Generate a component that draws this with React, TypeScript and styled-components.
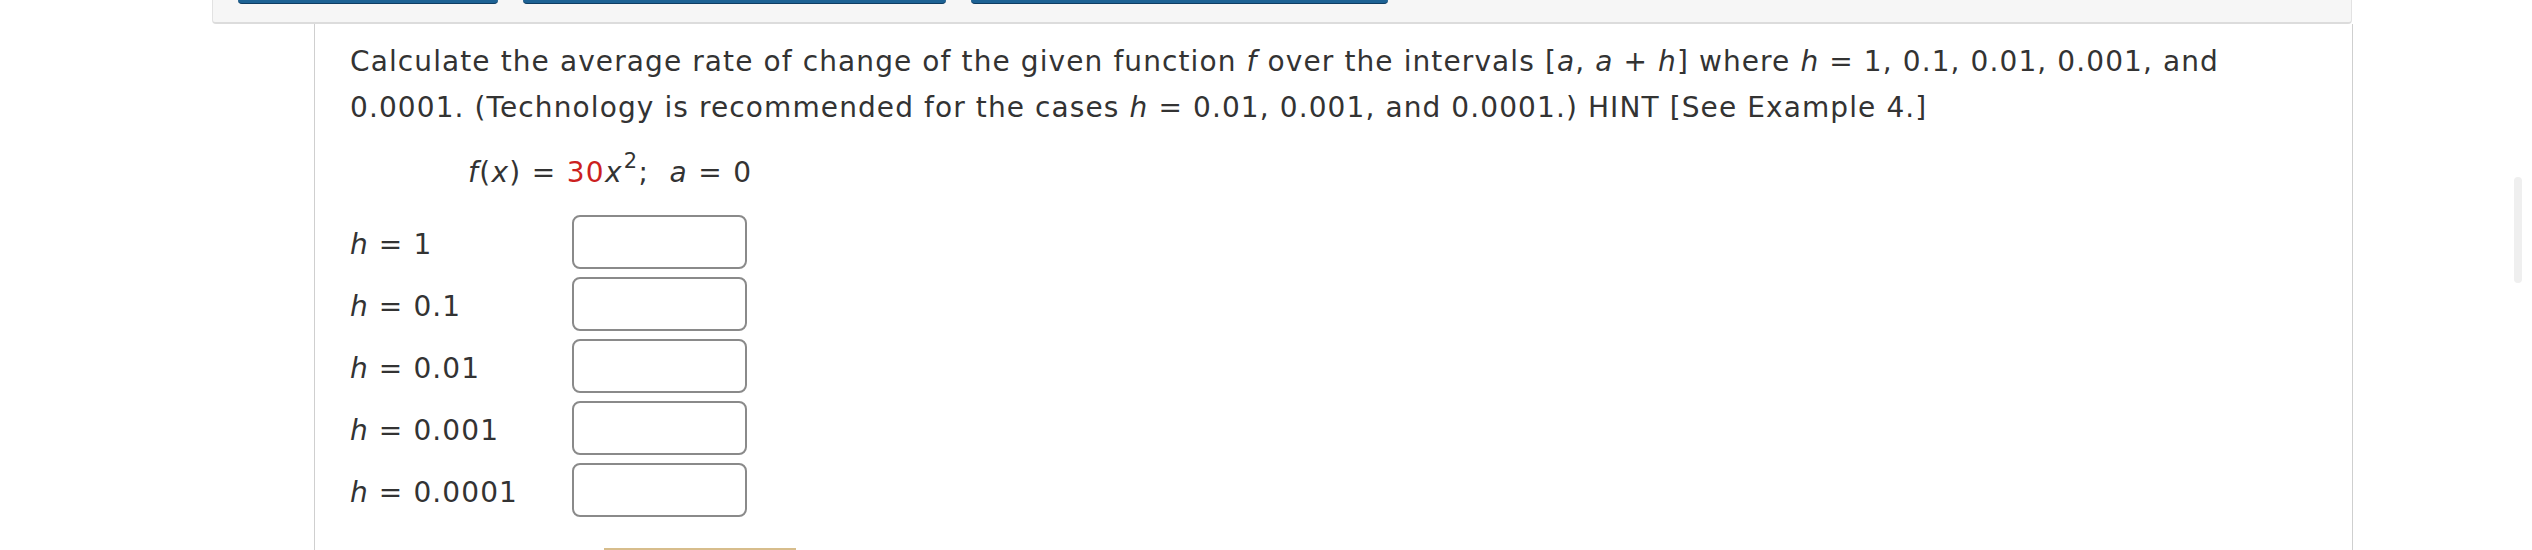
import styled, { createGlobalStyle } from 'styled-components';

const GlobalStyle = createGlobalStyle`
  body {
    margin: 0;
    background: #fff;
    font-family: Verdana, "DejaVu Sans", sans-serif;
    color: #333;
  }
`;

const Page = styled.div`
  position: relative;
  width: 2532px;
  height: 550px;
  overflow: hidden;
`;

const TopPanel = styled.div`
  margin-left: 212px;
  width: 2140px;
  height: 24px;
  box-sizing: border-box;
  background: #f6f6f6;
  border: 1px solid #e2e2e2;
  border-top: none;
  border-bottom: 2px solid #dcdcdc;
  border-radius: 0 0 4px 4px;
  display: flex;
  align-items: flex-start;
  gap: 25px;
  padding-left: 25px;
`;

const Tab = styled.div<{ $w: number }>`
  width: ${(p) => p.$w}px;
  height: 3px;
  background: #1d6294;
  border-bottom: 1px solid #0e3d63;
  border-radius: 0 0 4px 4px;
`;

const Main = styled.div`
  margin-left: 314px;
  width: 2039px;
  box-sizing: border-box;
  border-left: 1px solid #cfcfcf;
  border-right: 1px solid #cfcfcf;
  padding: 15px 0 0 35px;
  height: 526px;
  font-size: 28px;
  line-height: 46px;
  letter-spacing: 1.1px;
`;

const Prompt = styled.p`
  margin: 0;
  width: 1910px;
`;

const Var = styled.i`
  font-style: italic;
`;

const Formula = styled.div`
  margin: 19px 0 0 118px;
  white-space: pre;
  letter-spacing: 1.3px;
`;

const Coef = styled.span`
  color: #cc1f1f;
`;

const Sup = styled.sup`
  font-size: 21px;
  line-height: 0;
  vertical-align: 14px;
  margin-left: 1px;
`;

const Rows = styled.div`
  margin-top: 19px;
  display: flex;
  flex-direction: column;
  gap: 8px;
`;

const Row = styled.div`
  display: grid;
  grid-template-columns: 222px 175px;
  align-items: center;
  height: 54px;
`;

const Label = styled.span`
  padding-top: 6px;
  white-space: pre;
`;

const AnswerBox = styled.input`
  width: 175px;
  height: 54px;
  box-sizing: border-box;
  border: 2px solid #8a8a8a;
  border-radius: 8px;
  background: #fff;
  font-size: 26px;
  font-family: inherit;
  padding: 0 8px;
`;

const ButtonRow = styled.div`
  margin-top: 31px;
  padding-left: 254px;
`;

const SubmitButton = styled.div`
  width: 192px;
  height: 40px;
  border-top: 2px solid #d7bd8c;
  background: #fff;
`;

const ScrollThumb = styled.div`
  position: absolute;
  left: 2514px;
  top: 177px;
  width: 8px;
  height: 106px;
  border-radius: 4px;
  background: #efefef;
`;

const hValues = ['1', '0.1', '0.01', '0.001', '0.0001'];

const App = () => {
  return (
    <Page>
      <GlobalStyle />
      <TopPanel>
        <Tab $w={260} />
        <Tab $w={423} />
        <Tab $w={417} />
      </TopPanel>
      <Main>
        <Prompt>
          Calculate the average rate of change of the given function <Var>f</Var> over the
          intervals [<Var>a</Var>, <Var>a</Var> + <Var>h</Var>] where <Var>h</Var> = 1, 0.1,
          0.01, 0.001, and 0.0001. (Technology is recommended for the cases <Var>h</Var> = 0.01,
          0.001, and 0.0001.) HINT [See Example 4.]
        </Prompt>
        <Formula>
          <Var>f</Var>(<Var>x</Var>) = <Coef>30</Coef>
          <Var>x</Var>
          <Sup>2</Sup>;{'  '}
          <Var>a</Var> = 0
        </Formula>
        <Rows>
          {hValues.map((v) => (
            <Row key={v}>
              <Label>
                <Var>h</Var> = {v}
              </Label>
              <AnswerBox type="text" aria-label={`h = ${v}`} />
            </Row>
          ))}
        </Rows>
        <ButtonRow>
          <SubmitButton />
        </ButtonRow>
      </Main>
      <ScrollThumb />
    </Page>
  );
};

export default App;
